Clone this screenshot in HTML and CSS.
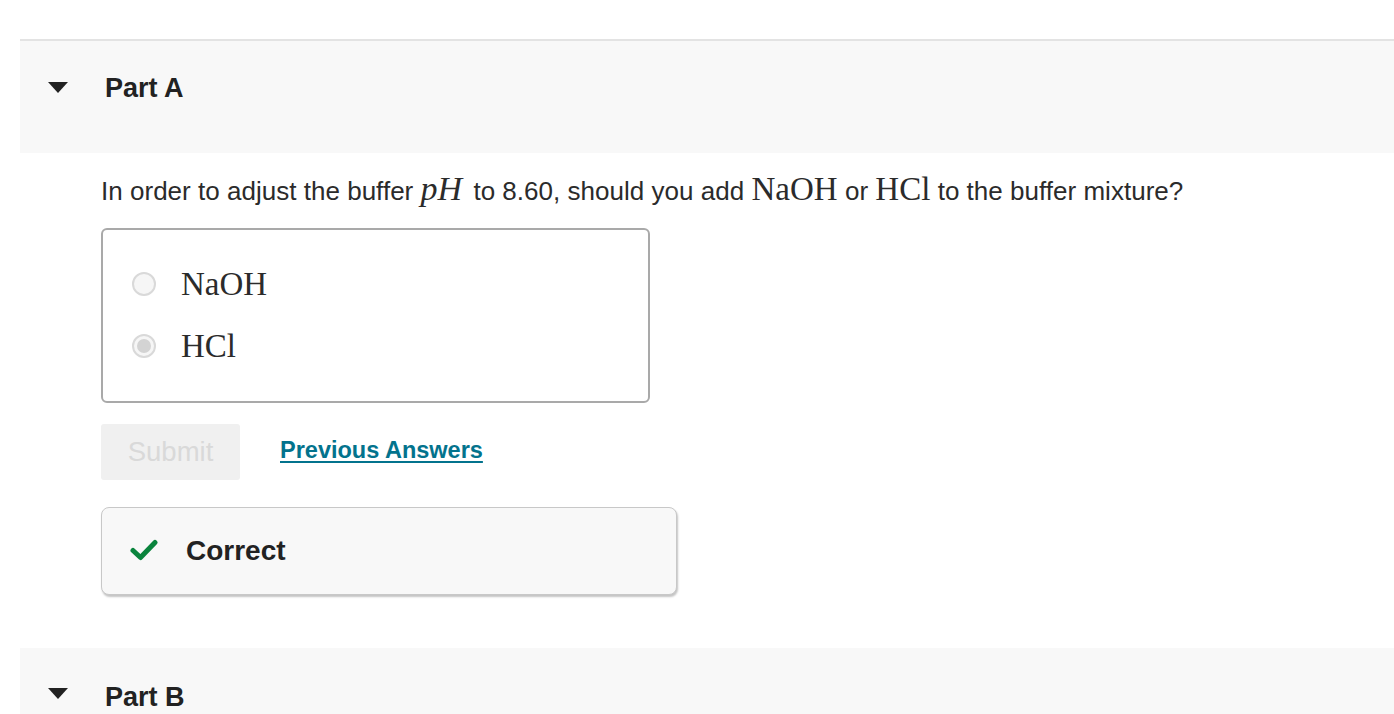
FILE: index.html
```html
<!DOCTYPE html>
<html>
<head>
<meta charset="utf-8">
<link rel="stylesheet" href="styles.css">
</head>
<body>
<div class="page">
  <section class="part">
    <div class="part-head">
      <span class="caret"></span>
      <h2 class="part-title">Part A</h2>
    </div>
    <div class="part-body">
      <p class="question">In order to adjust the buffer <span class="mi">pH</span> to 8.60, should you add <span class="mr">NaOH</span> or <span class="mr">HCl</span> to the buffer mixture?</p>
      <div class="options">
        <label class="option"><span class="radio"></span><span class="opt-text">NaOH</span></label>
        <label class="option"><span class="radio checked"></span><span class="opt-text">HCl</span></label>
      </div>
      <div class="actions">
        <button class="submit" disabled>Submit</button>
        <a class="prev" href="#">Previous Answers</a>
      </div>
      <div class="feedback">
        <svg class="check" viewBox="0 0 28 22" width="28" height="22"><path d="M3 11.5 L10.5 18.5 L25 3.5" fill="none" stroke="#0a843d" stroke-width="5" stroke-linecap="round" stroke-linejoin="round"/></svg>
        <span class="fb-text">Correct</span>
      </div>
    </div>
  </section>
  <section class="part part-b">
    <div class="part-head">
      <span class="caret"></span>
      <h2 class="part-title">Part B</h2>
    </div>
  </section>
</div>
</body>
</html>
```

FILE: styles.css
```css
html, body {
  margin: 0;
  padding: 0;
  background: #fff;
}
body {
  font-family: "Liberation Sans", Arial, Helvetica, sans-serif;
  color: #2b2b2b;
  overflow: hidden;
}
.page {
  padding-top: 39px;
  padding-left: 20px;
  height: 714px;
  box-sizing: border-box;
  overflow: hidden;
}
.part {
  border-top: 2px solid #e3e3e3;
}
.part-b {
  border-top: none;
  margin-top: 53px;
}
.part-head {
  background: #f8f8f8;
  height: 112px;
  display: flex;
  align-items: flex-start;
  padding-top: 31px;
  box-sizing: border-box;
}
.part-b .part-head {
  padding-top: 33px;
}
.caret {
  width: 0;
  height: 0;
  border-left: 10px solid transparent;
  border-right: 10px solid transparent;
  border-top: 11px solid #222;
  margin-left: 28px;
  margin-right: 37px;
  margin-top: 10px;
}
.part-b .caret {
  margin-top: 7px;
}
.part-title {
  margin: 0;
  font-size: 27px;
  line-height: 32px;
  font-weight: bold;
  color: #222;
}
.part-body {
  padding-left: 81px;
}
.question {
  margin: 0;
  padding-top: 23px;
  font-size: 26px;
  line-height: 30px;
  color: #2b2b2b;
  letter-spacing: 0.02px;
}
.mi {
  font-family: "Liberation Serif", "Times New Roman", serif;
  font-style: italic;
  font-size: 34px;
  line-height: 20px;
  margin-right: 4px;
}
.mr {
  font-family: "Liberation Serif", "Times New Roman", serif;
  font-size: 33px;
  line-height: 20px;
}
.options {
  margin-top: 22px;
  width: 549px;
  height: 175px;
  border: 2px solid #a9a9a9;
  border-radius: 6px;
  box-sizing: border-box;
  display: flex;
  flex-direction: column;
  gap: 14px;
  padding-top: 30px;
}
.option {
  display: flex;
  align-items: center;
  padding-left: 29px;
  height: 48px;
}
.radio {
  width: 24px;
  height: 24px;
  border-radius: 50%;
  border: 2px solid #d9d9d9;
  background: #f6f6f6;
  box-sizing: border-box;
  position: relative;
  margin-right: 25px;
  flex: none;
}
.radio.checked::after {
  content: "";
  position: absolute;
  left: 3px;
  top: 3px;
  width: 14px;
  height: 14px;
  border-radius: 50%;
  background: #d3d3d3;
}
.opt-text {
  font-family: "Liberation Serif", "Times New Roman", serif;
  font-size: 33px;
  color: #2b2b2b;
}
.actions {
  margin-top: 21px;
  display: flex;
  align-items: center;
  gap: 40px;
}
.submit {
  width: 139px;
  height: 56px;
  border: none;
  border-radius: 3px;
  background: #f0f0f0;
  color: #d9d9d9;
  font-family: "Liberation Sans", Arial, sans-serif;
  font-size: 27.5px;
  padding: 0;
}
.prev {
  font-size: 23.5px;
  font-weight: bold;
  color: #03738d;
  text-decoration: underline;
  text-underline-offset: 3px;
  text-decoration-thickness: 2px;
  margin-top: -4px;
}
.feedback {
  margin-top: 27px;
  width: 576px;
  height: 88px;
  box-sizing: border-box;
  background: #f8f8f8;
  border: 1px solid #c8c8c8;
  border-radius: 8px;
  box-shadow: 1px 2px 2px #c4c4c4;
  display: flex;
  align-items: center;
  padding-left: 28px;
}
.check {
  margin-right: 28px;
  margin-top: -2px;
}
.fb-text {
  font-size: 28px;
  font-weight: bold;
  color: #222;
}
```
